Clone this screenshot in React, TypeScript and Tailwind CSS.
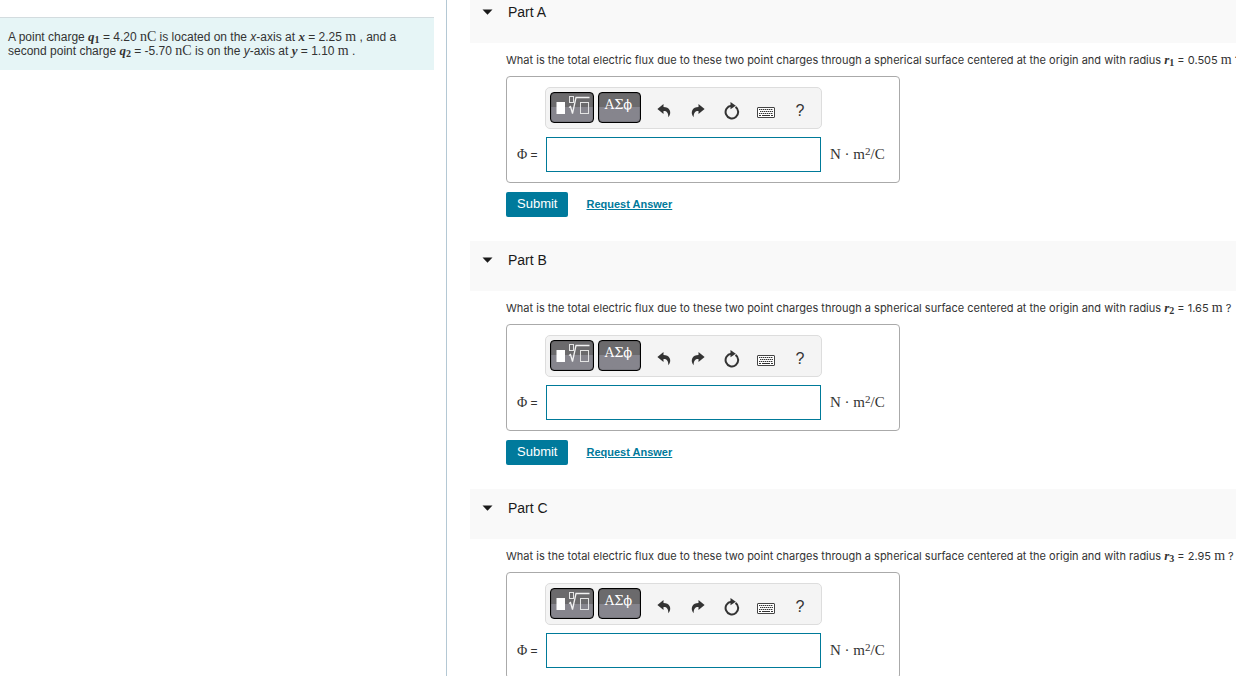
import type { ReactNode } from "react";

type PartData = { id: string; sub: string; radius: string };

const parts: PartData[] = [
  { id: "A", sub: "1", radius: "0.505" },
  { id: "B", sub: "2", radius: "1.65" },
  { id: "C", sub: "3", radius: "2.95" },
];

const serif = "font-['Liberation_Serif',serif]";

function Var({ name, sub }: { name: string; sub?: string }) {
  return (
    <span className={`${serif} text-[13px] leading-[0px] font-bold`}>
      <i>{name}</i>
      {sub && <span className="relative top-[2px] text-[10px]">{sub}</span>}
    </span>
  );
}

function Unit({ children }: { children: ReactNode }) {
  return <span className={`${serif} text-[14px] leading-[0px]`}>{children}</span>;
}

function TemplatesIcon() {
  return (
    <svg width="42" height="29" viewBox="0 0 42 29" fill="none" aria-hidden="true">
      <rect x="5.500" y="9" width="8.500" height="12" fill="#fff" />
      <rect x="18.500" y="3.500" width="4" height="6" stroke="#e4e4e4" />
      <path d="M18 14.500l1.500-1 2 7 3.500-16H38.500" stroke="#f2f2f2" strokeWidth="1.300" />
      <rect x="29.500" y="9.500" width="8" height="11" stroke="#e4e4e4" />
    </svg>
  );
}

function CurvedArrow({ flip }: { flip?: boolean }) {
  return (
    <svg
      width="14"
      height="14"
      viewBox="0 0 14 14"
      fill="#333"
      aria-hidden="true"
      className={flip ? "-scale-x-100" : ""}
    >
      <path d="M7.500 0L13.600 5 7.500 10V7C4.500 6.800 2.700 8.300 2.600 13.300 0.800 10.800 0.200 8.500 1.300 6.200 2.400 4 4.600 3 7.500 3z" />
    </svg>
  );
}

function ResetIcon() {
  return (
    <svg width="16" height="18" viewBox="0 0 16 18" aria-hidden="true">
      <path d="M11.500 4.900A6.300 6.300 0 1 1 7.300 3.800" fill="none" stroke="#333" strokeWidth="2" />
      <path d="M6.500 0L11.800 3.800 6.500 7.300z" fill="#333" />
    </svg>
  );
}

function KeyboardIcon() {
  return (
    <svg width="18" height="12" viewBox="0 0 18 12" fill="none" aria-hidden="true">
      <rect x="0.500" y="0.500" width="17" height="10" rx="0.500" fill="#fff" stroke="#444" />
      <path
        d="M2 2.500h14M3 4.500h13M2 6.500h14"
        stroke="#333"
        strokeWidth="1.200"
        strokeDasharray="1.400 0.600"
      />
      <path d="M2 8.500h2M5 8.500h8M14 8.500h2" stroke="#333" />
    </svg>
  );
}

const darkButton =
  "h-[31px] rounded-[4px] border border-black bg-linear-to-b from-[#6b6a6c] from-50% to-[#86858d] to-50% text-white shadow-[inset_0_0_1px_#000]";
const toolButton = "flex h-[37px] w-[34px] items-center justify-center";

function Toolbar() {
  return (
    <div
      role="toolbar"
      aria-label="Math input"
      className="flex h-[42px] w-[277px] items-start rounded-[5px] border border-[#ddd] bg-[#f4f4f4] p-1"
    >
      <button type="button" aria-label="Templates" className={`${darkButton} w-11`}>
        <TemplatesIcon />
      </button>
      <button
        type="button"
        aria-label="Symbols"
        className={`${darkButton} ml-1 w-[43px] pr-[2px] pb-[7px] font-['DejaVu_Serif',serif] text-[13px] leading-none`}
      >
        ΑΣϕ
      </button>
      <div className="ml-[6px] flex">
        <button type="button" aria-label="Undo" className={toolButton}>
          <CurvedArrow flip />
        </button>
        <button type="button" aria-label="Redo" className={toolButton}>
          <CurvedArrow />
        </button>
        <button type="button" aria-label="Reset" className={toolButton}>
          <ResetIcon />
        </button>
        <button type="button" aria-label="Keyboard shortcuts" className={`${toolButton} pt-1`}>
          <KeyboardIcon />
        </button>
        <button type="button" aria-label="Help" className={`${toolButton} text-[16px] text-[#333]`}>
          ?
        </button>
      </div>
    </div>
  );
}

function Part({ id, sub, radius }: PartData) {
  const inputId = `answer-${id}`;
  return (
    <section className="pb-6">
      <h2 className="h-[50px] bg-[#f9f9f9]">
        <button type="button" aria-expanded="true" className="flex items-center pt-[9px] pl-3 text-[14px] leading-5 text-[#1a1a1a]">
          <svg width="11" height="6" viewBox="0 0 11 6" aria-hidden="true">
            <path d="M0.500 0.500h10L5.500 5.800z" fill="#1a1a1a" />
          </svg>
          <span className="ml-[15px]">Part {id}</span>
        </button>
      </h2>
      <div className="pl-9">
        <p className="pt-[10px] font-['Inter','Liberation_Sans',sans-serif] text-[11px] leading-[14px] whitespace-nowrap">
          What is the total electric flux due to these two point charges through a spherical surface centered at the
          origin and with radius <Var name="r" sub={sub} /> = {radius} <Unit>m</Unit> ?
        </p>
        <form onSubmit={(e) => e.preventDefault()} className="mt-[9px]">
          <div className="w-[394px] rounded-[4px] border border-[#aaa] py-[10px] pl-[38px]">
            <Toolbar />
            <div className="mt-2 -ml-[38px] flex items-center">
              <label htmlFor={inputId} className="w-[39px] pl-[10px] whitespace-nowrap">
                <span className={`${serif} text-[14px] leading-none`}>Φ</span> =
              </label>
              <input id={inputId} type="text" className="h-[35px] w-[275px] border border-[#007a99] bg-white px-2 outline-none" />
              <span className={`${serif} ml-[9px] text-[15px] leading-none`}>
                N · m<span className="relative -top-1 text-[11px]">2</span>/C
              </span>
            </div>
          </div>
          <div className="mt-[9px] flex items-start">
            <button type="submit" className="h-[25px] rounded-[2px] bg-[#007a9c] px-[11px] pb-[2px] text-[13px] leading-none text-white">
              Submit
            </button>
            <a href="#request" className="mt-[5px] ml-[18px] text-[11px] font-bold text-[#00799b] underline">
              Request Answer
            </a>
          </div>
        </form>
      </div>
    </section>
  );
}

export default function App() {
  return (
    <div className="flex h-screen overflow-hidden bg-white font-['Liberation_Sans',Arial,sans-serif] text-[12px] leading-[14px] text-[#333]">
      <aside className="w-[447px] shrink-0 border-r border-[#b4c8d4] pt-[17px] pr-3">
        <p className="border-t border-[#d3dcdf] bg-[#e6f5f6] px-2 py-3">
          A point charge <Var name="q" sub="1" /> = 4.20 <Unit>nC</Unit> is located on the <i>x</i>-axis at{" "}
          <Var name="x" /> = 2.25 <Unit>m</Unit> , and a second point charge <Var name="q" sub="2" /> = -5.70{" "}
          <Unit>nC</Unit> is on the <i>y</i>-axis at <Var name="y" /> = 1.10 <Unit>m</Unit> .
        </p>
      </aside>
      <main className="min-w-0 flex-1 overflow-hidden pl-[23px]">
        <div className="-mt-[7px]">
          {parts.map((part) => (
            <Part key={part.id} {...part} />
          ))}
        </div>
      </main>
    </div>
  );
}
